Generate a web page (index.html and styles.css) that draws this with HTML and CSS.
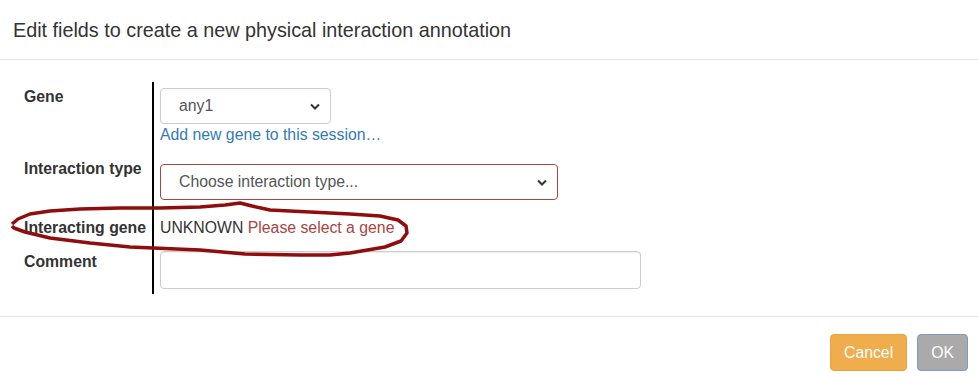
FILE: index.html
```html
<!DOCTYPE html>
<html>
<head>
  <title>New physical interaction annotation</title>
  <meta http-equiv="content-type" content="text/html; charset=utf-8" />
  <link rel="stylesheet" href="styles.css">
</head>
<body>
  <div class="modal">
    <div class="modal-header">
      <h4 class="modal-title">Edit fields to create a new physical interaction annotation</h4>
    </div>

    <div class="modal-body">
      <div class="form-row row-gene">
        <label class="control-label">Gene</label>
        <div class="field">
          <div class="select select-gene">
            <span>any1</span>
            <svg class="chevron" width="10" height="7" viewBox="0 0 10 7"><path d="M1 1.5 L5 5.5 L9 1.5" /></svg>
          </div>
          <a class="add-gene" href="#">Add new gene to this session…</a>
        </div>
      </div>

      <div class="form-row row-type">
        <label class="control-label">Interaction type</label>
        <div class="field">
          <div class="select select-type has-error">
            <span>Choose interaction type...</span>
            <svg class="chevron" width="10" height="7" viewBox="0 0 10 7"><path d="M1 1.5 L5 5.5 L9 1.5" /></svg>
          </div>
        </div>
      </div>

      <div class="form-row row-interactor">
        <label class="control-label">Interacting gene</label>
        <div class="field">UNKNOWN <span class="error-text">Please select a gene</span></div>
      </div>

      <div class="form-row row-comment">
        <label class="control-label">Comment</label>
        <div class="field">
          <input type="text" class="comment-input" />
        </div>
      </div>
    </div>

    <div class="modal-footer">
      <button class="btn btn-cancel">Cancel</button>
      <button class="btn btn-ok">OK</button>
    </div>

    <!-- hand drawn marks on top of the screenshot -->
    <svg class="annotation" width="978" height="383" viewBox="0 0 978 383">
      <line x1="153" y1="82" x2="153" y2="294" class="mark-line" />
      <polyline class="mark-ring" points="12,224 18,219 30,214 50,211 80,209 120,208 160,208 200,207 225,205 240,203 252,206 270,210 310,212 350,214 380,216 398,220 406,226 407,233 401,241 385,247 350,253 330,255 300,255 245,254 200,250 130,247 90,243 50,238 25,232 14,228 12,226" />
    </svg>
  </div>
</body>
</html>
```

FILE: styles.css
```css
body {
  margin: 0;
  background: #fff;
  font-family: "Liberation Sans", Arial, sans-serif;
  font-size: 15.8px;
  line-height: 22px;
  color: #333;
}
.modal {
  position: relative;
  width: 978px;
  height: 383px;
  overflow: hidden;
}
.modal-header {
  padding: 15px 13px 14px;
  border-bottom: 1px solid #e5e5e5;
}
.modal-title {
  margin: 0;
  font-size: 19.8px;
  font-weight: normal;
  line-height: 30px;
}
.modal-body {
  padding: 28px 24px 27px;
}
.form-row {
  display: flex;
}
.control-label {
  width: 136px;
  flex: none;
  font-weight: bold;
  line-height: 17px;
}
.field {
  flex: none;
}
.row-gene {
  margin-bottom: 18px;
}
.row-type {
  margin-bottom: 17px;
}
.row-type .control-label {
  margin-top: -4px;
}
.row-interactor {
  margin-bottom: 12px;
  align-items: baseline;
}
.row-interactor .control-label {
  line-height: 22px;
}
.row-comment .control-label {
  margin-top: 2px;
}
.error-text {
  color: #a94442;
}
.select {
  display: flex;
  align-items: center;
  justify-content: space-between;
  box-sizing: border-box;
  height: 36px;
  padding: 0 10px 0 18px;
  border: 1px solid #ccc;
  border-radius: 4px;
  color: #555;
  background: #fff;
}
.select-gene {
  width: 171px;
}
.select-type {
  width: 398px;
}
.has-error {
  border-color: #a94442;
}
.chevron path {
  fill: none;
  stroke: #333;
  stroke-width: 2;
}
.add-gene {
  display: block;
  color: #337ab7;
  text-decoration: none;
}
.comment-input {
  display: block;
  box-sizing: border-box;
  width: 481px;
  height: 38px;
  margin: 0;
  border: 1px solid #ccc;
  border-radius: 4px;
  box-shadow: inset 0 1px 1px rgba(0, 0, 0, .075);
}
.modal-footer {
  display: flex;
  justify-content: flex-end;
  gap: 10px;
  padding: 17px 10px 12px;
  border-top: 1px solid #e5e5e5;
}
.btn {
  height: 37px;
  padding: 0 13px;
  border: 1px solid transparent;
  border-radius: 4px;
  font-family: inherit;
  font-size: 15.8px;
  color: #fff;
}
.btn-cancel {
  background-color: #f0ad4e;
  border-color: #eea236;
}
.btn-ok {
  background-color: #aaa;
  border-color: #7a9cc6;
}
.annotation {
  position: absolute;
  left: 0;
  top: 0;
  pointer-events: none;
}
.mark-line {
  stroke: #000;
  stroke-width: 2;
}
.mark-ring {
  fill: none;
  stroke: #8f0d0d;
  stroke-width: 3.5;
  stroke-linejoin: round;
}
```
